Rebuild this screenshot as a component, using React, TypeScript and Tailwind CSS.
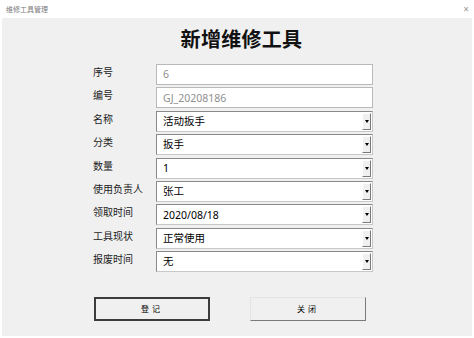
import React from 'react';

const font = { fontFamily: '"Noto Sans", "Noto Sans CJK SC", sans-serif' };

/** Read-only text box (greyed out value). */
function TextBox({ value }: { value: string }) {
    return (
        <div className="w-[217px] h-[21px] bg-white border border-[#b9b9b9] flex items-center pl-[6px] text-[10.5px] text-[#8f8f8f] leading-none">
            {value}
        </div>
    );
}

/** Combo box with the little drop button on the right. */
function ComboBox({ value }: { value: string }) {
    return (
        <div className="w-[217px] h-[21px] bg-white border border-[#8a8a8a] border-r-[#c8c8c8] border-b-[#c8c8c8] flex items-stretch">
            <div className="flex-1 flex items-center pl-[6px] text-[10.5px] text-black leading-none">{value}</div>
            <div className="w-[9px] my-[1px] mr-[1px] bg-[#f0f0f0] border-l border-t border-[#ffffff] border-r border-b border-r-[#7a7a7a] border-b-[#7a7a7a] flex items-center justify-center">
                <div className="w-0 h-0 border-l-[2.5px] border-r-[2.5px] border-t-[3px] border-l-transparent border-r-transparent border-t-black" />
            </div>
        </div>
    );
}

const rows: { label: string; value: string; kind: 'text' | 'combo' }[] = [
    { label: '序号', value: '6', kind: 'text' },
    { label: '编号', value: 'GJ_20208186', kind: 'text' },
    { label: '名称', value: '活动扳手', kind: 'combo' },
    { label: '分类', value: '扳手', kind: 'combo' },
    { label: '数量', value: '1', kind: 'combo' },
    { label: '使用负责人', value: '张工', kind: 'combo' },
    { label: '领取时间', value: '2020/08/18', kind: 'combo' },
    { label: '工具现状', value: '正常使用', kind: 'combo' },
    { label: '报废时间', value: '无', kind: 'combo' },
];

export default function App() {
    return (
        <div className="w-[474px] h-[338px] bg-white flex flex-col overflow-hidden" style={font}>
            {/* title bar */}
            <div className="h-[18px] flex items-center justify-between pl-[6px] pr-[5px]">
                <span className="text-[7px] text-[#7a7a7a] leading-none">维修工具管理</span>
                <span className="text-[10px] text-[#9a9a9a] leading-none">×</span>
            </div>

            {/* client area */}
            <div className="mx-[2px] h-[318px] bg-[#f0f0f0] flex flex-col">
                <h1 className="mt-[10px] h-[24px] text-center pl-[9px] text-[20px] font-bold leading-[24px] text-[#111] tracking-[0.3px]">
                    新增维修工具
                </h1>

                <div className="mt-[12px] ml-[91px] flex flex-col gap-[2.4px]">
                    {rows.map((r) => (
                        <div key={r.label} className="flex items-start h-[21px]">
                            <div className="w-[63px] text-[10px] leading-[16px] text-[#222]">{r.label}</div>
                            {r.kind === 'text' ? <TextBox value={r.value} /> : <ComboBox value={r.value} />}
                        </div>
                    ))}
                </div>

                <div className="mt-[25px] ml-[92px] flex gap-[40px]">
                    <button
                        type="button"
                        className="w-[116px] h-[24px] bg-[#f0f0f0] border-2 border-[#3c3c3c] text-[8px] tracking-[3px] text-black leading-none"
                    >
                        登记
                    </button>
                    <button
                        type="button"
                        className="w-[116px] h-[24px] bg-[#f0f0f0] border border-[#e4e4e4] border-r-[#7a7a7a] border-b-[#7a7a7a] text-[8px] tracking-[3px] text-black leading-none"
                    >
                        关闭
                    </button>
                </div>
            </div>
        </div>
    );
}
